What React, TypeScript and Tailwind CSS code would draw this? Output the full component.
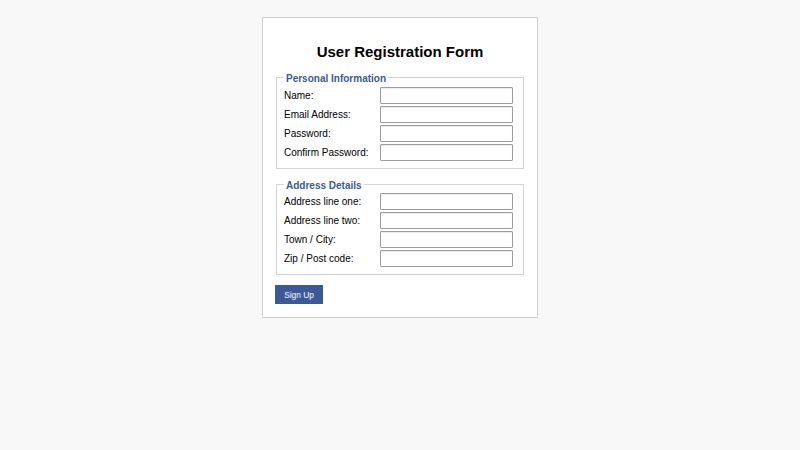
const personal = ["Name:", "Email Address:", "Password:", "Confirm Password:"];
const address = ["Address line one:", "Address line two:", "Town / City:", "Zip / Post code:"];

function Section({ legend, labels, className }: { legend: string; labels: string[]; className?: string }) {
  return (
    <fieldset className={"mx-[1px] border border-[#d4d4d4] pl-[7px] pr-[9px] pb-[7px] " + (className ?? "")}>
      <legend className="px-[2px] text-[10px] leading-[12px] font-bold text-[#3b5998]">
        <span className="relative top-[1.5px]">{legend}</span>
      </legend>
      <div className="flex flex-col gap-[2px]">
        {labels.map((l) => (
          <div key={l} className="flex items-center h-[17px]">
            <label className="w-[96px] text-[10px] leading-[12px] text-black">{l}</label>
            <input
              type="text"
              className="w-[133px] h-[17px] border border-[#9c9c9c] rounded-[1px] bg-white shadow-[inset_0_1px_1px_rgba(0,0,0,0.08)]"
            />
          </div>
        ))}
      </div>
    </fieldset>
  );
}

export default function App() {
  return (
    <div className="min-h-[450px] bg-[#f8f8f8] pt-[17px] font-['Liberation_Sans',Arial,sans-serif]">
      <form className="mx-auto w-[276px] bg-white border border-[#d0d0d0] px-[12px] pt-[25px] pb-[12px]">
        <h1 className="text-center text-[15px] leading-[18px] font-bold text-black mb-[10px]">
          User Registration Form
        </h1>
        <Section legend="Personal Information" labels={personal} className="pt-[4px]" />
        <Section legend="Address Details" labels={address} className="mt-[9px] pt-[3px]" />
        <button
          type="button"
          className="mt-[10px] w-[48px] h-[19px] bg-[#3b5998] text-white text-[8.33px] leading-[10px]"
        >
          Sign Up
        </button>
      </form>
    </div>
  );
}
